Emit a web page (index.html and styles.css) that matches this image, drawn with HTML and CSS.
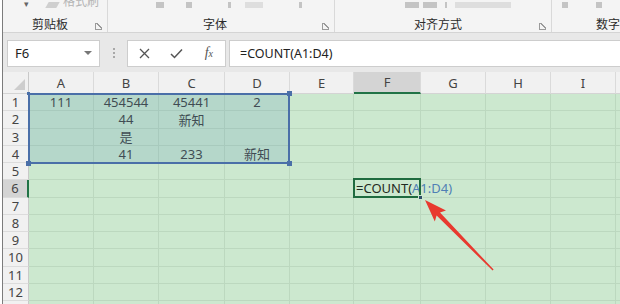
FILE: index.html
```html
<!DOCTYPE html>
<html lang="zh-CN">
<head>
    <meta charset="UTF-8">
    <title>COUNT 函数</title>
    <link rel="stylesheet" href="styles.css">
</head>
<body>
<div class="app">
    <!-- 功能区（只露出底部） -->
    <div class="ribbon">
        <div class="group clip">
            <div class="tools">
                <span class="drop">▾</span>
                <span class="brush"></span>
                <span class="faded">格式刷</span>
            </div>
            <div class="label-row"><span class="label">剪贴板</span><span class="launcher"></span></div>
        </div>
        <div class="group font">
            <div class="tools">
                <span class="stub" style="margin-left: 48px; width: 8px"></span>
                <span class="stub" style="margin-left: 22px; width: 6px"></span>
                <span class="stub" style="margin-left: 36px; width: 3px"></span>
                <span class="stub light" style="margin-left: 14px; width: 18px"></span>
                <span class="stub" style="margin-left: 36px; width: 3px"></span>
            </div>
            <div class="label-row"><span class="label">字体</span><span class="launcher"></span></div>
        </div>
        <div class="group align">
            <div class="tools">
                <span class="stub" style="margin-left: 70px; width: 14px"></span>
                <span class="stub" style="margin-left: 4px; width: 14px"></span>
                <span class="stub" style="margin-left: 8px; width: 2px"></span>
                <span class="stub light" style="margin-left: 8px; width: 56px"></span>
            </div>
            <div class="label-row"><span class="label">对齐方式</span><span class="launcher"></span></div>
        </div>
        <div class="group num">
            <div class="tools">
                <span class="stub" style="margin-left: 10px; width: 6px"></span>
                <span class="stub" style="margin-left: 28px; width: 6px"></span>
            </div>
            <div class="label-row"><span class="label">数字</span></div>
        </div>
    </div>

    <!-- 编辑栏 -->
    <div class="formula-bar">
        <div class="namebox">
            <span>F6</span>
            <span class="caret"></span>
        </div>
        <div class="grip"><i></i><i></i><i></i></div>
        <div class="fbtns">
            <span class="fbtn">
                <svg width="11" height="11" viewBox="0 0 11 11"><path d="M1 1L10 10M10 1L1 10" stroke="#555" stroke-width="1.3" fill="none"/></svg>
            </span>
            <span class="fbtn">
                <svg width="13" height="11" viewBox="0 0 13 11"><path d="M1 6L4.5 9.5L12 1.5" stroke="#555" stroke-width="1.5" fill="none"/></svg>
            </span>
            <span class="fbtn fx"><i>f</i><sub>x</sub></span>
        </div>
        <div class="finput">=COUNT(A1:D4)</div>
    </div>

    <!-- 工作表 -->
    <div class="sheet">
        <div class="cells" id="cells"></div>
        <div class="marks">
            <div class="range">
                <span class="handle tl"></span>
                <span class="handle tr"></span>
                <span class="handle bl"></span>
                <span class="handle br"></span>
            </div>
            <div class="active"><span class="fill-handle"></span></div>
            <svg class="arrow" viewBox="0 0 197 121" preserveAspectRatio="none">
                <polygon points="71,37 92,47.5 86,49.6 139.6,106.6 138.6,107.6 82.6,52.6 80.8,58.4" fill="#e8392f"/>
            </svg>
        </div>
    </div>
</div>

<script>
  const cols = ['A', 'B', 'C', 'D', 'E', 'F', 'G', 'H', 'I', 'J'];
  const data = {
    1: {A: '111', B: '454544', C: '45441', D: '2'},
    2: {B: '44', C: '新知'},
    3: {B: '是'},
    4: {B: '41', C: '233', D: '新知'},
    6: {F: '=COUNT(<span class="ref">A1:D4)</span>'}
  };

  let html = '<div class="corner"><span class="tri"></span></div>';
  cols.forEach(c => {
    html += `<div class="col-head${c === 'F' ? ' on' : ''}">${c}</div>`;
  });
  // 第 13 行只露出上沿，不写行号
  for (let r = 1; r <= 13; r++) {
    const label = r < 13 ? r : '';
    html += `<div class="row-head${r === 6 ? ' on' : ''}">${label}</div>`;
    cols.forEach(c => {
      const v = (data[r] && data[r][c]) || '';
      const cls = (r === 6 && c === 'F') ? 'cell formula' : 'cell';
      html += `<div class="${cls}">${v}</div>`;
    });
  }
  document.getElementById('cells').innerHTML = html;
</script>
</body>
</html>
```

FILE: styles.css
```css
* {
    box-sizing: border-box;
}
html, body {
    margin: 0;
    height: 304px;
    overflow: hidden;
    background: #fff;
}
body {
    font-family: "Noto Sans", "Noto Sans CJK SC", sans-serif;
    color: #333;
}
.app {
    margin-left: 2px;
    border-left: 1px solid #7c7c7c;
    height: 304px;
    overflow: hidden;
}

/* 功能区 */
.ribbon {
    display: flex;
    height: 33px;
    background: #f4f4f4;
    border-bottom: 1px solid #d4d4d4;
}
.group {
    display: flex;
    flex-direction: column;
    border-right: 1px solid #d9d9d9;
}
.group.clip { width: 105px; }
.group.font { width: 227px; }
.group.align { width: 217px; }
.group.num { flex: 1; border-right: none; }
.tools {
    height: 11px;
    overflow: hidden;
    display: flex;
    align-items: flex-end;
    padding-bottom: 3px;
}
.tools .drop {
    margin-left: 21px;
    font-size: 9px;
    line-height: 8px;
    color: #666;
}
.tools .brush {
    margin-left: 18px;
    width: 11px;
    height: 6px;
    background: #cfcfcf;
    transform: skewX(-30deg);
}
.tools .faded {
    margin-left: 5px;
    font-family: "Noto Sans CJK SC", sans-serif;
    font-size: 12px;
    line-height: 14px;
    color: #b4b4b4;
}
.stub {
    height: 6px;
    background: #c4c4c4;
}
.stub.light {
    background: #dedede;
}
.label-row {
    flex: 1;
    display: flex;
    align-items: center;
    font-family: "Noto Sans CJK SC", sans-serif;
    font-size: 12px;
    color: #2b2b2b;
    padding-top: 3px;
}
.clip .label { padding-left: 29px; }
.font .label { padding-left: 95px; }
.align .label { padding-left: 79px; }
.num .label { padding-left: 44px; }
.launcher {
    margin-left: auto;
    margin-right: 5px;
    margin-top: 7px;
    width: 7px;
    height: 7px;
    border-left: 1px solid #9a9a9a;
    border-bottom: 1px solid #9a9a9a;
    background: linear-gradient(45deg, transparent 45%, #9a9a9a 45%, #9a9a9a 60%, transparent 60%);
}

/* 编辑栏 */
.formula-bar {
    display: flex;
    align-items: center;
    height: 39px;
    background: #e8e8e8;
    padding: 1px 0 0 4px;
}
.namebox {
    width: 93px;
    height: 27px;
    background: #fff;
    border: 1px solid #cdcdcd;
    display: flex;
    align-items: center;
    justify-content: space-between;
    padding: 0 7px 0 7px;
    font-size: 13px;
    color: #222;
}
.caret {
    width: 0;
    height: 0;
    border-left: 4px solid transparent;
    border-right: 4px solid transparent;
    border-top: 4px solid #777;
}
.grip {
    width: 27px;
    display: flex;
    flex-direction: column;
    align-items: center;
    gap: 2px;
}
.grip i {
    width: 2px;
    height: 2px;
    background: #a8a8a8;
}
.fbtns {
    width: 99px;
    height: 27px;
    background: #fff;
    border: 1px solid #cdcdcd;
    display: flex;
}
.fbtn {
    width: 33px;
    display: flex;
    align-items: center;
    justify-content: center;
}
.fbtn.fx {
    font-family: "Liberation Serif", serif;
    font-size: 14px;
    color: #555;
}
.fbtn.fx sub {
    font-size: 10px;
    font-style: italic;
    vertical-align: -2px;
}
.finput {
    flex: 1;
    margin-left: 3px;
    height: 27px;
    background: #fff;
    border: 1px solid #cdcdcd;
    border-right: none;
    display: flex;
    align-items: center;
    padding-left: 10px;
    font-size: 12.5px;
    color: #222;
}

/* 工作表 */
.sheet {
    display: grid;
}
.sheet > * {
    grid-area: 1 / 1;
}
.cells, .marks {
    display: grid;
    grid-template-columns: 26px 65px 65px 66px 65px 64px 67px 65px 65px 65px 65px;
    grid-template-rows: 22px repeat(13, 17.25px);
}
.cells {
    background: #cce8cf;
    font-size: 13px;
    color: #3a3a3a;
}
.corner, .col-head, .row-head {
    background: #f1f1f1;
    color: #444;
    display: flex;
    align-items: center;
    justify-content: center;
}
.corner {
    border-right: 1px solid #c9c9c9;
    border-bottom: 1px solid #d4d4d4;
    align-items: flex-end;
    justify-content: flex-end;
    padding: 0 3px 3px 0;
}
.tri {
    width: 0;
    height: 0;
    border-left: 11px solid transparent;
    border-bottom: 11px solid #cdcdcd;
}
.col-head {
    border-right: 1px solid #dadada;
    border-bottom: 1px solid #d4d4d4;
}
.row-head {
    border-right: 1px solid #c9c9c9;
    border-bottom: 1px solid #dcdcdc;
}
.col-head.on {
    background: #d4d4d4;
    border-bottom: 2px solid #217346;
}
.row-head.on {
    background: #d4d4d4;
    border-right: 2px solid #217346;
}
.cell {
    border-right: 1px solid #bcd8bf;
    border-bottom: 1px solid #bcd8bf;
    display: flex;
    align-items: center;
    justify-content: center;
    white-space: nowrap;
    font-family: "Noto Sans", "Noto Sans CJK SC", sans-serif;
}
.cell.formula {
    justify-content: flex-start;
    padding-left: 2px;
    color: #1f2a22;
    overflow: visible;
}
.ref {
    color: #4f7fb5;
}

/* 选区与标注 */
.marks {
    pointer-events: none;
}
.range {
    grid-column: 2 / 6;
    grid-row: 2 / 6;
    margin: -1px 0 -1px -1px;
    border: 2px solid #4a6fa8;
    background: rgba(89, 152, 187, 0.2);
    position: relative;
}
.handle {
    position: absolute;
    width: 5px;
    height: 5px;
    background: #4a6fa8;
}
.handle.tl { left: -3px; top: -3px; width: 3px; height: 3px; }
.handle.tr { right: -4px; top: -4px; }
.handle.bl { left: -4px; bottom: -4px; }
.handle.br { right: -4px; bottom: -4px; }
.active {
    grid-column: 7 / 8;
    grid-row: 7 / 8;
    margin: -2px 0 0 -1px;
    border: 2px solid #1f6b3f;
    position: relative;
}
.fill-handle {
    position: absolute;
    right: -4px;
    bottom: -4px;
    width: 5px;
    height: 5px;
    background: #2f4f6a;
    border: 1px solid #cce8cf;
}
.arrow {
    grid-column: 7 / 10;
    grid-row: 6 / 13;
    width: 197px;
    height: 121px;
}
```
